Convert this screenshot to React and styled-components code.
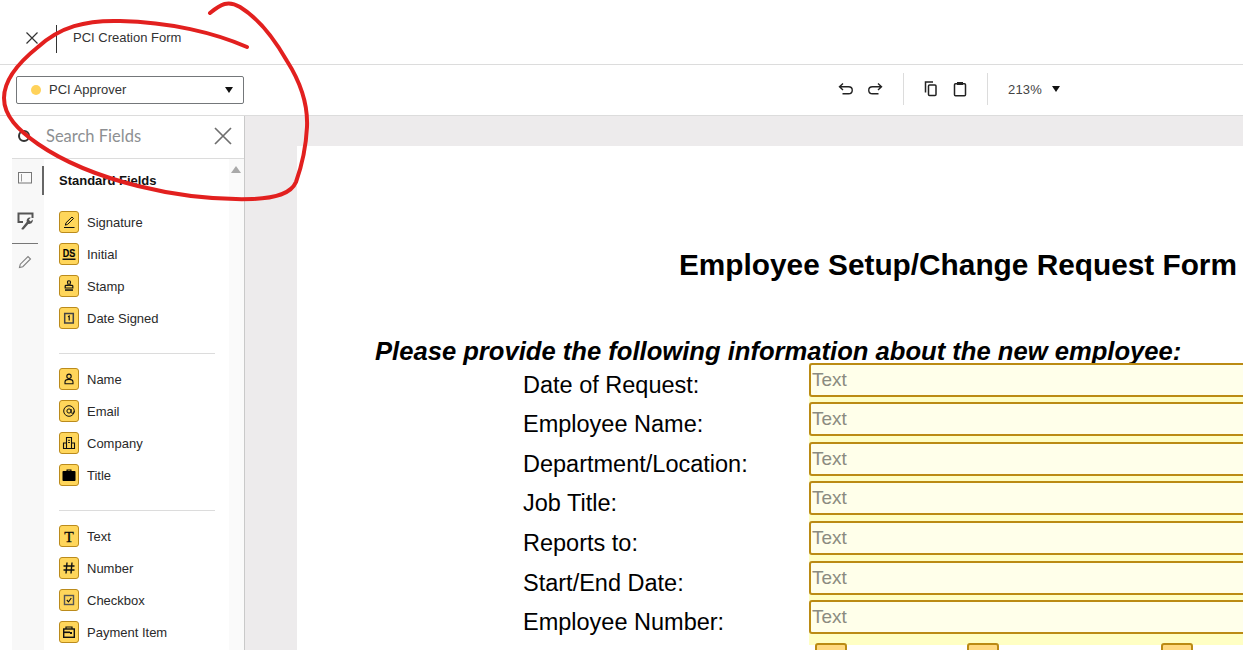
import styled, { createGlobalStyle } from "styled-components";

const GlobalStyle = createGlobalStyle`
  html, body {
    margin: 0;
    padding: 0;
    background: #fff;
    font-family: "Liberation Sans", Arial, sans-serif;
  }
`;

const Line = ({ d, w = 1.3 }) => (
  <path d={d} fill="none" stroke="currentColor" strokeWidth={w} />
);

const Glyph = ({ size = 14, children }) => (
  <svg width={size} height={size} viewBox={`0 0 ${size} ${size}`}>
    {children}
  </svg>
);

const fieldIcons = {
  signature: (
    <Glyph>
      <Line d="M2 12.500h10.500" w={1} />
      <Line d="M3.300 10.200l.7-2.400L10 2l1.500 1.500-5.800 5.800z" w={1} />
    </Glyph>
  ),
  initial: (
    <Glyph size={16}>
      <text x="8" y="10.500" textAnchor="middle" fontSize="11" fontWeight="700" fontFamily="Liberation Sans" textLength="12.500" lengthAdjust="spacingAndGlyphs" stroke="currentColor" strokeWidth=".2">DS</text>
      <rect x="1.500" y="12.500" width="13" height="1.500" fill="currentColor" />
    </Glyph>
  ),
  stamp: (
    <Glyph>
      <Line d="M5.500 3c0-1.700 3-1.700 3 0 0 1.200-.8 1.700-.8 3.300H10c.5 0 .8.300.8.800V9H3.200V7.100c0-.5.3-.8.8-.8h2.300C6.300 4.700 5.500 4.200 5.500 3z" w={1.200} />
      <rect x="3" y="10.300" width="8" height="1.500" fill="currentColor" />
    </Glyph>
  ),
  date: (
    <Glyph>
      <rect x="2.700" y="2.500" width="8.600" height="9.500" fill="none" stroke="#444" strokeWidth="1.500" />
      <Line d="M6 5.800l1.200-.8v4.500" w={1.100} />
    </Glyph>
  ),
  name: (
    <Glyph>
      <circle cx="7" cy="4.300" r="2.200" fill="none" stroke="currentColor" strokeWidth="1.100" />
      <Line d="M3 11.800V10c0-1.500 1.500-2.600 4-2.600s4 1.100 4 2.600v1.800z" w={1.100} />
    </Glyph>
  ),
  email: (
    <Glyph>
      <circle cx="7" cy="7" r="5.300" fill="none" stroke="currentColor" strokeWidth="1" />
      <circle cx="7" cy="7" r="2.100" fill="none" stroke="currentColor" strokeWidth="1" />
      <Line d="M9.100 5v3.300c0 1.500 3.200 1.500 3.200-1.300" w={1} />
    </Glyph>
  ),
  company: (
    <Glyph>
      <Line d="M1.500 12.500V7h3M4.500 12.500V1.500h5v11M9.500 7h3v5.500M1 12.500h12" w={1.100} />
      <Line d="M6 4.300h2M6 6.500h2" w={.9} />
    </Glyph>
  ),
  title: (
    <Glyph size={14}>
      <path d="M4.500 3V1.500h5V3h3.200c.4 0 .8.400.8.800v8.400c0 .4-.4.800-.8.800H1.300c-.4 0-.8-.4-.8-.8V3.800c0-.4.4-.8.800-.8zm1.100 0h2.800v-.6H5.600z" fill="#000" fillRule="evenodd" />
    </Glyph>
  ),
  text: (
    <Glyph>
      <text x="7" y="12.500" textAnchor="middle" fontSize="15.500" fontFamily="Liberation Serif" stroke="currentColor" strokeWidth=".3">T</text>
    </Glyph>
  ),
  number: (
    <Glyph>
      <Line d="M5 1.500L4 12.500M10 1.500L9 12.500M1.500 5h11M1.500 9h11" w={1.400} />
    </Glyph>
  ),
  checkbox: (
    <Glyph>
      <rect x="2.500" y="2.500" width="9" height="9" fill="none" stroke="#555" strokeWidth="1.400" />
      <Line d="M4.800 7l1.700 1.800L9.300 5" w={1.100} />
    </Glyph>
  ),
  payment: (
    <Glyph>
      <Line d="M4 4V2h6v2" w={1.200} />
      <rect x="1.700" y="4" width="10.600" height="8.300" fill="none" stroke="currentColor" strokeWidth="1.400" />
      <rect x="2" y="6.500" width="6" height="1.600" fill="currentColor" />
      <rect x="8" y="7" width="2" height="2" fill="currentColor" />
    </Glyph>
  ),
};

const fieldGroups = [
  [
    { icon: "signature", label: "Signature" },
    { icon: "initial", label: "Initial" },
    { icon: "stamp", label: "Stamp" },
    { icon: "date", label: "Date Signed" },
  ],
  [
    { icon: "name", label: "Name" },
    { icon: "email", label: "Email" },
    { icon: "company", label: "Company" },
    { icon: "title", label: "Title" },
  ],
  [
    { icon: "text", label: "Text" },
    { icon: "number", label: "Number" },
    { icon: "checkbox", label: "Checkbox" },
    { icon: "payment", label: "Payment Item" },
  ],
];

const formRows = [
  "Date of Request:",
  "Employee Name:",
  "Department/Location:",
  "Job Title:",
  "Reports to:",
  "Start/End Date:",
  "Employee Number:",
];

const App = () => {
  return (
    <>
      <GlobalStyle />
      <Screen>
        <Header>
          <CloseBtn>
            <svg width="14" height="14" viewBox="0 0 14 14">
              <Line d="M1.500 1.500l11 11M12.500 1.500l-11 11" w={1.200} />
            </svg>
          </CloseBtn>
          <Title>PCI Creation Form</Title>
        </Header>

        <Toolbar>
          <RoleSelect>
            <RoleDot />
            <RoleName>PCI Approver</RoleName>
            <Caret />
          </RoleSelect>
          <Tools>
            <ToolGroup $gap={13}>
              <svg width="16" height="14" viewBox="0 0 16 14">
                <Line d="M5 1.500L1.500 4.700 5 8M1.500 4.700h9c5 0 5 7 0 7H4.500" w={1.400} />
              </svg>
              <svg width="16" height="14" viewBox="0 0 16 14">
                <Line d="M11 1.500l3.500 3.200L11 8M14.500 4.700h-9c-5 0-5 7 0 7h6" w={1.400} />
              </svg>
            </ToolGroup>
            <ToolDivider />
            <ToolGroup $gap={15}>
              <svg width="14" height="16" viewBox="0 0 14 16">
                <Line d="M9 1H1.500v10.500" w={1.500} />
                <rect x="4.500" y="4" width="7.500" height="10.500" rx="1" fill="none" stroke="currentColor" strokeWidth="1.500" />
              </svg>
              <svg width="14" height="16" viewBox="0 0 14 16">
                <rect x="1.500" y="2.700" width="11" height="12" rx="1" fill="none" stroke="currentColor" strokeWidth="1.500" />
                <rect x="4" y="1" width="6" height="3" fill="currentColor" />
              </svg>
            </ToolGroup>
            <ToolDivider />
            <Zoom>
              213%
              <Caret />
            </Zoom>
          </Tools>
        </Toolbar>

        <Main>
          <Sidebar>
            <SearchRow>
              <SearchIcon />
              <SearchText>Search Fields</SearchText>
              <svg width="18" height="18" viewBox="0 0 18 18" color="#6f6f6f">
                <Line d="M1 1l16 16M17 1L1 17" w={1.700} />
              </svg>
            </SearchRow>
            <SideBody>
              <Rail>
                <RailIcon $top={13}>
                  <svg width="14" height="12" viewBox="0 0 14 12">
                    <rect x=".5" y=".5" width="13" height="10.500" fill="#fafafa" stroke="#777" />
                    <path d="M3.500 2v7.500" stroke="#999" />
                  </svg>
                </RailIcon>
                <RailIcon $top={28}>
                  <svg width="17" height="18" viewBox="0 0 17 18">
                    <path d="M6 10H1.500V1.500h14V6" fill="none" stroke="currentColor" strokeWidth="2" />
                    <path d="M4.500 16.500L9.800 9.800c-.6-2.300.9-4.300 3.200-4.300l.8.200-2 2.100 1.800 1.800 2.100-2c.6 2.700-1.700 5-4.400 4.300L6.700 17.300c-.8.600-2.900-.1-2.200-.8z" fill="currentColor" />
                  </svg>
                </RailIcon>
                <RailDivider />
                <RailIcon $top={11}>
                  <svg width="14" height="14" viewBox="0 0 14 14" color="#808080">
                    <Line d="M1.500 12.500l.8-3.300L10 1.500l2.500 2.500-7.700 7.700z" w={1.100} />
                  </svg>
                </RailIcon>
              </Rail>
              <Panel>
                <PanelTitle>Standard Fields</PanelTitle>
                {fieldGroups.map((group, i) => (
                  <FieldGroup key={i} $first={i === 0}>
                    {group.map((field) => (
                      <FieldRow key={field.label}>
                        <FieldTile>{fieldIcons[field.icon]}</FieldTile>
                        <span>{field.label}</span>
                      </FieldRow>
                    ))}
                  </FieldGroup>
                ))}
              </Panel>
              <ScrollTrack>
                <ScrollArrow />
              </ScrollTrack>
            </SideBody>
          </Sidebar>

          <Canvas>
            <Page>
              <DocTitle>Employee Setup/Change Request Form</DocTitle>
              <DocSubtitle>Please provide the following information about the new employee:</DocSubtitle>
              <FormGrid>
                {formRows.map((label) => (
                  <FormRow key={label}>
                    <FormLabel>{label}</FormLabel>
                    <FieldCell>
                      <TextField>Text</TextField>
                    </FieldCell>
                  </FormRow>
                ))}
              </FormGrid>
              <TabsRow>
                <TabStub $gap={0} />
                <TabStub $gap={120} />
                <TabStub $gap={162} />
              </TabsRow>
            </Page>
          </Canvas>
        </Main>

        <Scribble viewBox="0 0 320 210" width="320" height="210">
          <path
            d="M247 47C215 33 170 22 120 21 85 20 60 27 38 47 18 63 4 80 4 98c0 18 14 32 34 46 26 18 60 32 100 42 40 10 80 14 115 13 22-1 38-5 43-17 5-14 10-35 11-55 1-22-6-44-20-66C275 40 258 18 240 7 228 0 221 4 210 13"
            fill="none"
            stroke="#e2201f"
            strokeWidth="4"
            strokeLinecap="round"
          />
        </Scribble>
      </Screen>
    </>
  );
};

export default App;

const Screen = styled.div`
  position: relative;
  width: 1243px;
  height: 650px;
  overflow: hidden;
  display: flex;
  flex-direction: column;
  background: #fff;
  color: #222;
`;

const Header = styled.header`
  height: 64px;
  flex: none;
  box-sizing: content-box;
  display: flex;
  align-items: center;
  border-bottom: 1px solid #dcdcdc;
`;

const CloseBtn = styled.div`
  width: 57px;
  height: 28px;
  margin-top: 13px;
  box-sizing: border-box;
  padding: 6px 0 0 25px;
  border-right: 1px solid #333;
  color: #333;
  & svg {
    display: block;
  }
`;

const Title = styled.div`
  margin: 10px 0 0 16px;
  font-size: 13px;
  color: #333;
`;

const Toolbar = styled.div`
  height: 51px;
  flex: none;
  box-sizing: border-box;
  display: flex;
  align-items: center;
  padding: 0 0 1px 16px;
  border-bottom: 1px solid #dcdcdc;
`;

const RoleSelect = styled.div`
  width: 228px;
  height: 28px;
  box-sizing: border-box;
  display: flex;
  align-items: center;
  padding: 0 10px 0 14px;
  border: 1px solid #74777a;
  border-radius: 2px;
`;

const RoleDot = styled.span`
  width: 10px;
  height: 10px;
  border-radius: 50%;
  background: #ffd25a;
  margin-right: 8px;
`;

const RoleName = styled.span`
  flex: 1;
  font-size: 13px;
  color: #333;
`;

const Caret = styled.span`
  width: 0;
  height: 0;
  border-left: 4px solid transparent;
  border-right: 4px solid transparent;
  border-top: 6px solid #111;
`;

const Tools = styled.div`
  display: flex;
  align-items: center;
  margin-left: 594px;
  margin-top: -1px;
  color: #222;
`;

const ToolGroup = styled.div`
  display: flex;
  align-items: center;
  gap: ${(p) => p.$gap}px;
  & svg {
    display: block;
  }
`;

const ToolDivider = styled.div`
  width: 1px;
  height: 32px;
  background: #dcdcdc;
  margin: 0 20px;
`;

const Zoom = styled.div`
  display: flex;
  align-items: center;
  gap: 10px;
  font-size: 13px;
  letter-spacing: 0.2px;
  color: #444;
`;

const Main = styled.div`
  flex: 1;
  min-height: 0;
  display: flex;
`;

const Sidebar = styled.aside`
  width: 245px;
  flex: none;
  box-sizing: border-box;
  display: flex;
  flex-direction: column;
  padding-left: 12px;
  border-right: 1px solid #c9c9c9;
`;

const SearchRow = styled.div`
  height: 43px;
  flex: none;
  box-sizing: border-box;
  display: flex;
  align-items: center;
  padding: 0 12px 2px 6px;
  border-bottom: 1px solid #dcdcdc;
`;

const SearchIcon = styled.span`
  width: 8px;
  height: 8px;
  border: 2px solid #333;
  border-radius: 50%;
  flex: none;
`;

const SearchText = styled.span`
  flex: 1;
  margin-left: 16px;
  font-family: Lato, "Liberation Sans", sans-serif;
  font-size: 16.500px;
  color: #8d8f92;
`;

const SideBody = styled.div`
  flex: 1;
  min-height: 0;
  display: flex;
`;

const Rail = styled.div`
  width: 32px;
  flex: none;
  display: flex;
  flex-direction: column;
  background: #f8f8f8;
  color: #555;
`;

const RailIcon = styled.div`
  display: flex;
  justify-content: center;
  padding-top: ${(p) => p.$top}px;
  padding-right: 6px;
  & svg {
    display: block;
  }
`;

const RailDivider = styled.div`
  width: 26px;
  height: 1px;
  background: #777;
  margin-top: 13px;
`;

const Panel = styled.div`
  flex: 1;
  min-width: 0;
  background: #fff;
  position: relative;
  padding: 0 14px 0 15px;
  &::before {
    content: "";
    position: absolute;
    left: -2px;
    top: 7px;
    width: 2px;
    height: 29px;
    background: #666;
  }
`;

const PanelTitle = styled.div`
  padding-top: 14px;
  font-size: 13px;
  font-weight: 700;
  line-height: 15px;
  color: #111;
`;

const FieldGroup = styled.div`
  display: flex;
  flex-direction: column;
  gap: 10px;
  margin-top: ${(p) => (p.$first ? 23 : 0)}px;
  padding: ${(p) => (p.$first ? "0 0 24px" : "14px 0 24px")};
  border-bottom: 1px solid #dcdcdc;
`;

const FieldRow = styled.div`
  display: flex;
  align-items: center;
  gap: 8px;
  height: 22px;
  font-size: 13px;
  color: #2a2a2a;
`;

const FieldTile = styled.div`
  width: 20px;
  height: 22px;
  box-sizing: border-box;
  flex: none;
  display: flex;
  align-items: center;
  justify-content: center;
  background: #ffd65b;
  border: 1px solid #bb8b1c;
  border-radius: 3px;
  color: #111;
  & svg {
    display: block;
  }
`;

const ScrollTrack = styled.div`
  width: 15px;
  flex: none;
  background: #fafafa;
  box-sizing: border-box;
  padding: 7px 0 0 2px;
`;

const ScrollArrow = styled.div`
  width: 0;
  height: 0;
  border-left: 5px solid transparent;
  border-right: 5px solid transparent;
  border-bottom: 7px solid #a9a9a9;
`;

const Canvas = styled.main`
  flex: 1;
  min-width: 0;
  overflow: hidden;
  padding: 30px 0 0 52px;
  background: #edebec;
`;

const Page = styled.div`
  height: 100%;
  background: #fff;
  box-sizing: border-box;
  overflow: hidden;
  color: #000;
`;

const DocTitle = styled.h1`
  margin: 101px 0 0 382px;
  font-size: 29.800px;
  line-height: 35px;
  font-weight: 700;
  white-space: nowrap;
`;

const DocSubtitle = styled.h2`
  margin: 54px 0 0 78px;
  font-size: 25.600px;
  line-height: 30px;
  font-weight: 700;
  font-style: italic;
  white-space: nowrap;
`;

const FormGrid = styled.div`
  display: grid;
  grid-auto-rows: 39.600px;
  margin: -3.400px 0 0 226px;
`;

const FormRow = styled.div`
  display: grid;
  grid-template-columns: 286px 1fr;
  min-height: 0;
`;

const FormLabel = styled.div`
  font-size: 23.500px;
  line-height: 45px;
  white-space: nowrap;
`;

const FieldCell = styled.div`
  background: #ffffc4;
  overflow: hidden;
`;

const TextField = styled.div`
  height: 34px;
  box-sizing: border-box;
  width: 460px;
  padding-left: 1px;
  border: 2px solid #bb8b14;
  border-radius: 3px;
  background: #ffffea;
  font-size: 19px;
  line-height: 29px;
  color: #8b8b80;
`;

const TabsRow = styled.div`
  display: flex;
  margin: 0 0 0 512px;
  padding: 2px 0 0 6px;
  border-top: 1px solid #777;
`;

const TabStub = styled.div`
  width: 32px;
  height: 20px;
  flex: none;
  box-sizing: border-box;
  margin-left: ${(p) => p.$gap}px;
  background: #ffd980;
  border: 2px solid #bb8b14;
  border-radius: 3px;
`;

const Scribble = styled.svg`
  position: absolute;
  left: 0;
  top: 0;
  pointer-events: none;
`;
